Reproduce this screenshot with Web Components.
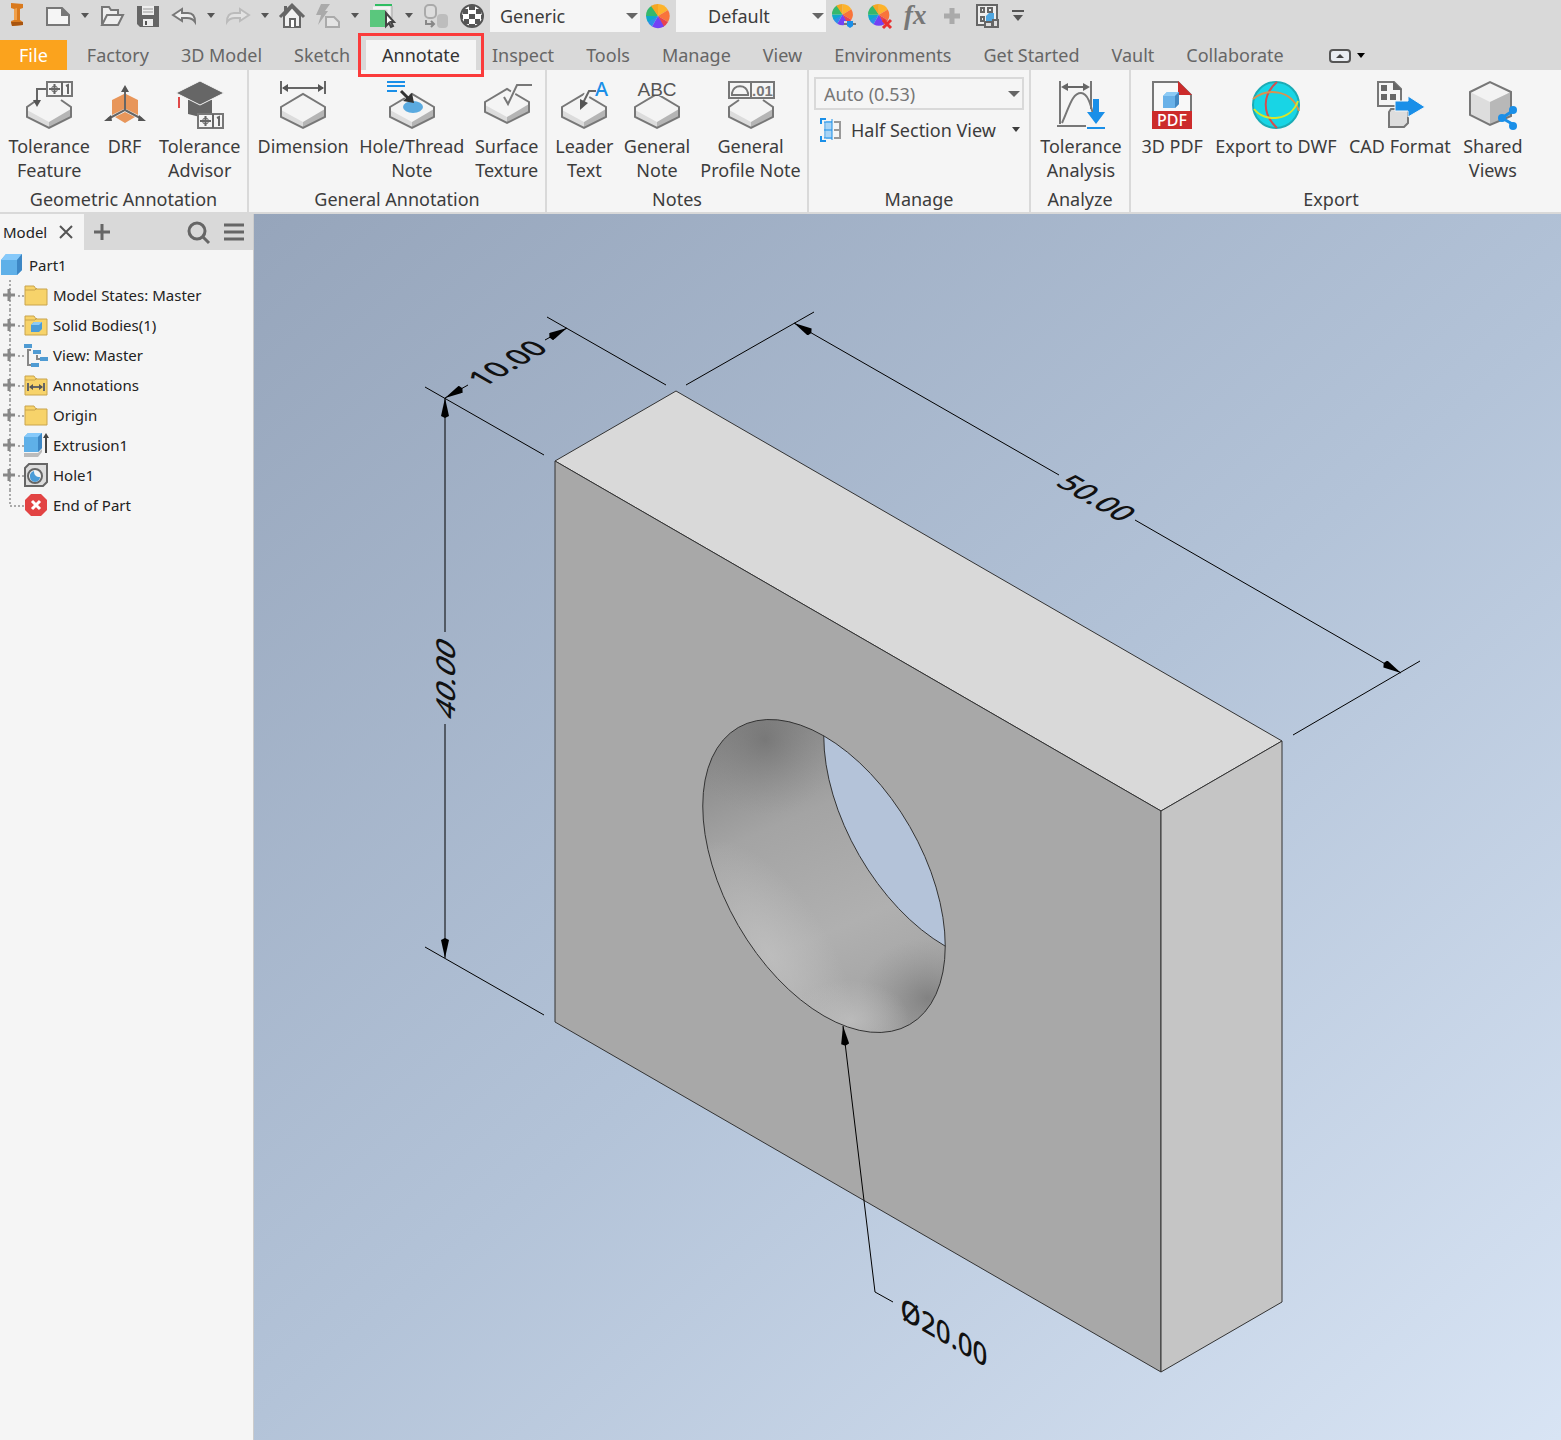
<!DOCTYPE html>
<html lang="en">
<head>
<meta charset="utf-8">
<title>Part1</title>
<style>
    body {
        --bar: #d9d9d9;
        --panel: #f5f5f5;
        --icon: #666;
        --blue: #1a8fe8;
        color: #3c3c3c;
        font: 18px/24px "Noto Sans", "Open Sans", sans-serif;
        margin: 0;
    }
</style>
</head>
<body>
<cad-app></cad-app>

<script>
// flat slab shared by most of the annotation icons, 48x48 box
const slab = `
    <path d="M2 26 24 13 46 26V36L24 47 2 36Z" fill="#f4f4f4"/>
    <path d="M2 29 24 41V47L2 36Z" fill="#dcdcdc"/>
    <path d="M46 28 24 41V47L46 36Z" fill="#b5b5b5"/>
`;
const slabEdge = '<path d="M2 26 24 13 46 26V36L24 47 2 36Z" fill="none" stroke="#777" stroke-width="2"/>';
const slabOpen = '<path d="M12 19 2 26V36L24 47 46 36V26L36 19" fill="none" stroke="#777" stroke-width="2"/>';
const frameOne = `
    <rect x="1" y="1" width="25" height="14" fill="#f5f5f5" stroke="#777" stroke-width="2"/>
    <path d="M16 1V15M8.500 3V13M3 8H14M20 5 22 4V13" fill="none" stroke="#666" stroke-width="2"/>
    <circle cx="8.500" cy="8" r="3" fill="none" stroke="#666"/>
`;
const wheel = `
    <path d="M12 12V0A12 12 0 0 1 22 6Z" fill="#fdb32b"/>
    <path d="M12 12 22 6A12 12 0 0 1 22 18Z" fill="#f9743a"/>
    <path d="M12 12 22 18A12 12 0 0 1 17 23Z" fill="#e8434f"/>
    <path d="M12 12 18 22.500A12 12 0 0 1 6 22.500Z" fill="#7341f5"/>
    <path d="M12 12 6 22.500A12 12 0 0 1 1 16Z" fill="#2d8fe8"/>
    <path d="M12 12 2 18A12 12 0 0 1 0 12Z" fill="#0ea9c9"/>
    <path d="M12 12H0A12 12 0 0 1 6 1.500Z" fill="#35b86b"/>
    <path d="M12 12 5 2A12 12 0 0 1 12 0Z" fill="#f5a623"/>
`;
const folder = '<path d="M1 3H10L12 6H23V22H1Z" fill="#f7d36a" stroke="#c9a44d"/><path d="M1 7H11L13 5" fill="none" stroke="#c9a44d"/>';

// name: [viewBox width, viewBox height, markup]
const icons = {
    logo: [14, 26, '<path d="M1 1 13 2V6L10 7V18L13 20V23L2 24 1 19 4 18V7L1 6Z" fill="#d97a1e"/><path d="M4 7 7 6V18L4 18Z" fill="#f0a04a"/><path d="M1 20 13 20V23L2 24Z" fill="#a85510"/>'],
    page: [24, 24, '<path d="M1 4H16L23 11V21H1Z" fill="#f5f5f5" stroke="#777" stroke-width="2"/><path d="M15 3 24 12H15Z" fill="#777"/>'],
    open: [24, 24, '<path d="M2 20V3H9L11 6H18V10" fill="#eee" stroke="#777" stroke-width="2"/><path d="M2 21 7 11H23L18 21Z" fill="#eee" stroke="#777" stroke-width="2"/>'],
    save: [24, 24, '<path d="M1 2H23V23H4L1 20Z" fill="#666"/><path d="M6 2H18V11H6ZM7 15H17V22H7Z" fill="#eee"/><path d="M7 5H17M7 8H17" stroke="#999" stroke-width="1"/><path d="M9 17H11V21H9Z" fill="#555"/>'],
    undo: [24, 24, '<path d="M1 11 10 5V9H16C21 9 23 12 23 18 21 15 19 14 15 14H10V17Z" fill="#eee" stroke="#777" stroke-width="2"/>'],
    redo: [24, 24, '<path d="M23 11 14 5V9H8C3 9 1 12 1 18 3 15 5 14 9 14H14V17Z" fill="#e2e2e2" stroke="#bbb" stroke-width="2"/>'],
    home: [24, 24, '<path d="M4 12 12 3 20 12V23H4Z" fill="#f1f1f1" stroke="#666" stroke-width="2"/><path d="M0 13 12 1 24 13" fill="none" stroke="#666" stroke-width="3"/><path d="M4 2H7V8L4 11Z" fill="#666"/><path d="M10 23V15H15V23" fill="#fff" stroke="#666" stroke-width="2"/>'],
    flash: [24, 24, '<path d="M5 0H14L9 7H12L2 21 5 11H0Z" fill="#aaa"/><path d="M10 13H18L23 18V23H10Z" fill="#e4e4e4" stroke="#aaa" stroke-width="2"/>'],
    select: [24, 24, '<path d="M5 1H22" fill="none" stroke="#2fbd62" stroke-width="2"/><path d="M22 2V14" stroke="#aaa" stroke-width="1"/><path d="M3 4H19V20" fill="none" stroke="#f3f3f3" stroke-width="3"/><path d="M0 6H15V23H0Z" fill="#5ac77d"/><path d="M16 9V22L19 19 21 23 23 22 21 18H24Z" fill="#fff" stroke="#444" stroke-width="2"/>'],
    stack: [24, 24, '<rect x="1" y="1" width="11" height="13" rx="4" fill="#ddd" stroke="#aaa" stroke-width="2"/><rect x="13" y="10" width="11" height="14" rx="4" fill="#bdbdbd"/><path d="M2 16V20H9M7 17 10 20 7 23" fill="none" stroke="#888" stroke-width="2"/>'],
    checker: [24, 24, '<circle cx="12" cy="12" r="11" fill="#fff" stroke="#555" stroke-width="2"/><path d="M9 1H15V6H9ZM3 5H8V10H3ZM16 5H21V10H16ZM9 10H15V15H9ZM1 11H3V15H1ZM21 11H23V15H21ZM4 15H9V20H4ZM15 15H20V20H15ZM9 20H15V23H9Z" fill="#555"/>'],
    wheel: [24, 24, wheel],
    wheelEdit: [24, 24, `<g transform="scale(.88)">${wheel}</g><path d="M12 17H24V24H12Z" fill="#d9d9d9"/><path d="M12 20H15M21 20H24" stroke="#777" stroke-width="2"/><path d="M15 17H21V22L18 24 15 22Z" fill="#1a8fe8"/>`],
    wheelClear: [24, 24, `<g transform="scale(.9)">${wheel}</g><path d="M15 16 23 24M23 16 15 24" stroke="#e83030" stroke-width="3"/>`],
    fx: [26, 26, '<text x="1" y="21" font-family="Liberation Serif, serif" font-size="27" font-style="italic" font-weight="bold" fill="#777">fx</text>'],
    plus: [24, 24, '<path d="M12 4V20M4 12H20" stroke="#aaa" stroke-width="5"/>'],
    params: [24, 24, '<path d="M1 1H21V21H1Z" fill="#eee" stroke="#666" stroke-width="2"/><path d="M5 4H8V8H5ZM12 4H16V8H12ZM5 13H8V17H5Z" fill="none" stroke="#666" stroke-width="2"/><path d="M10 12 13 9H18V17H10Z" fill="#4fa6e0"/><path d="M9 18H16V23H9ZM17 16H22V23H17Z" fill="#ddd" stroke="#666" stroke-width="2"/>'],
    more: [14, 14, '<path d="M1 2H13" stroke="#555" stroke-width="2"/><path d="M2 6H12L7 12Z" fill="#555"/>'],
    arrow: [8, 6, '<path d="M0 0H8L4 5Z" fill="currentColor"/>'],
    wideArrow: [12, 6, '<path d="M0 0H12L6 6Z" fill="#666"/>'],
    collapse: [24, 16, '<rect x="2" y="2" width="20" height="12" rx="3" fill="#e9edf2" stroke="#555" stroke-width="2"/><path d="M8 10H16L12 6Z" fill="#444"/>'],

    feature: [48, 48, `${slab}${slabOpen}<path d="M22 8H12V24" fill="none" stroke="#666" stroke-width="2"/><path d="M8 19H16L12 26Z" fill="#555"/><g transform="translate(21 0)">${frameOne}</g>`],
    drf: [48, 48, '<path d="M11 19 23 13V28L11 34ZM37 19 25 13V28L37 34ZM24 31 34 36 24 42 14 36Z" fill="#e8965a"/><path d="M24 9V29L7 38M24 29 41 38" fill="none" stroke="#666" stroke-width="2"/><path d="M20 11 24 4 28 11ZM10 34 3 40H11ZM38 34 45 40H37Z" fill="#555"/>'],
    advisor: [48, 48, `<path d="M12 19H36V34L24 36 12 33Z" fill="#666"/><path d="M24 0 48 12 24 24 0 12Z" fill="#666" stroke="#f5f5f5" stroke-width="1"/><path d="M3 16V27" stroke="#e04848" stroke-width="2"/><g transform="translate(21 32)">${frameOne}</g>`],
    dimension: [48, 48, `${slab}${slabEdge}<path d="M2 0V13M46 0V13M4 7H44" stroke="#666" stroke-width="2"/><path d="M3 7 9 3V11ZM45 7 39 3V11Z" fill="#555"/>`],
    hole: [48, 48, `${slab}${slabEdge}<ellipse cx="25" cy="26" rx="10" ry="6" fill="#5aaae0"/><path d="M12 8 20 16" stroke="#f5f5f5" stroke-width="6"/><path d="M-1 1H17M-1 5H17M-1 10H9" stroke="#1a8fe8" stroke-width="2"/><path d="M13 10 21 18" stroke="#333" stroke-width="3"/><path d="M26 22 15 20 24 12Z" fill="#333"/>`],
    surface: [48, 48, `<g transform="translate(0 -5)">${slab}${slabEdge}</g><path d="M21 17 25 23 34 3H49" fill="none" stroke="#f5f5f5" stroke-width="5"/><path d="M21 16 25 23 34 4H49" fill="none" stroke="#777" stroke-width="2"/>`],
    leader: [48, 48, `${slab}${slabEdge}<path d="M21 26 29 10H36" fill="none" stroke="#f5f5f5" stroke-width="6"/><path d="M22 24 29 10H36" fill="none" stroke="#666" stroke-width="2"/><path d="M20 29V18L28 22Z" fill="#555"/><text x="35" y="15" font-size="20" font-weight="500" fill="#1a8fe8">A</text>`],
    note: [48, 48, `${slab}${slabEdge}<path d="M2 0H46V15H2Z" fill="#f5f5f5"/><text x="24" y="15" text-anchor="middle" font-family="Liberation Sans, sans-serif" font-size="19" fill="#555">ABC</text>`],
    profile: [48, 48, `${slab}${slabOpen}<path d="M2 1H47V17H2Z" fill="#f5f5f5" stroke="#777" stroke-width="2"/><path d="M24 1V17M5 14H21V12C19 3 7 3 5 12Z" fill="none" stroke="#777" stroke-width="2"/><text x="25" y="15" font-family="Liberation Sans, sans-serif" font-size="15" font-weight="bold" fill="#777">.01</text>`],
    section: [24, 24, '<path d="M6 3H12V21H6Z" fill="#a9d4f5"/><path d="M6 1H1V6M1 18V23H6" fill="none" stroke="#1a8fe8" stroke-width="2"/><path d="M4 4H12M4 12H12M4 20H12M5 4V20M12 1V22" stroke="#1a8fe8" stroke-width="1"/><path d="M14 4H20V20H14M14 12H20" fill="none" stroke="#999" stroke-width="2"/>'],
    analysis: [48, 48, '<path d="M3 0V43M34 0V28M0 45H29" stroke="#777" stroke-width="2"/><path d="M5 42C12 27 15 12 24 12 31 12 34 25 36 33" fill="none" stroke="#777" stroke-width="2"/><path d="M7 6H30" stroke="#666" stroke-width="2"/><path d="M4 6 11 2V10ZM33 6 26 2V10Z" fill="#666"/><path d="M36 18H42V31H48L39 43 30 31H36ZM30 46H48V48H30Z" fill="#1a8fe8"/>'],
    pdf: [48, 48, '<path d="M5 1H30L43 14V31H5Z" fill="#f8f8f8" stroke="#777" stroke-width="2"/><path d="M30 0 44 14H30Z" fill="#cc2b2b"/><path d="M15 15 19 11H31V23L27 27H15Z" fill="#69b1e8"/><path d="M15 15 19 11H31L27 15Z" fill="#8ccaf5"/><path d="M27 15 31 11V23L27 27Z" fill="#4388c2"/><path d="M4 30H44V48H4Z" fill="#cc2b2b"/><text x="24" y="45" text-anchor="middle" font-size="16" font-weight="500" fill="#fff">PDF</text>'],
    dwf: [48, 48, '<circle cx="24" cy="24" r="23" fill="#18d5e5" stroke="#1cabb5" stroke-width="2"/><path d="M25 1C11 13 9 32 25 47" fill="none" stroke="#d44e50" stroke-width="2"/><path d="M1 18C15 7 39 8 47 30" fill="none" stroke="#d99250" stroke-width="2"/><path d="M2 28C13 42 39 40 46 20" fill="none" stroke="#d8e52b" stroke-width="2"/>'],
    format: [48, 48, '<path d="M2 1H18L25 8V25H2Z" fill="#f5f5f5" stroke="#777" stroke-width="2"/><path d="M17 0 26 9H17ZM5 4H11V10H5ZM5 13H11V19H5ZM14 13H20V19H14Z" fill="#666"/><path d="M15 28H32V42L28 46H13V31Z" fill="#ddd" stroke="#777" stroke-width="2"/><path d="M19 20H32V15L49 26 32 36V30H19Z" fill="#1a8fe8" stroke="#f5f5f5"/>'],
    shared: [48, 48, '<path d="M1 11 21 1 42 11V35L21 44 1 34Z" fill="#ddd"/><path d="M1 11 21 1 42 11 21 21Z" fill="#f3f3f3"/><path d="M21 21 42 11V35L21 44Z" fill="#b8b8b8"/><path d="M1 11 21 1 42 11V35L21 44 1 34Z" fill="none" stroke="#777" stroke-width="2"/><path d="M45 29 33 37 45 44" fill="none" stroke="#1a8fe8" stroke-width="3"/><g fill="#1a8fe8"><circle cx="44" cy="29" r="4"/><circle cx="33" cy="37" r="4"/><circle cx="44" cy="45" r="4"/></g>'],

    close: [16, 16, '<path d="M2 2 14 14M14 2 2 14" stroke="#555" stroke-width="2"/>'],
    add: [16, 16, '<path d="M8 0V16M0 8H16" stroke="#666" stroke-width="3"/>'],
    search: [24, 24, '<circle cx="11" cy="11" r="8" fill="none" stroke="#666" stroke-width="3"/><path d="M17 17 23 23" stroke="#666" stroke-width="3"/>'],
    menu: [20, 18, '<path d="M0 2H20M0 9H20M0 16H20" stroke="#666" stroke-width="3"/>'],
    part: [24, 24, '<path d="M1 7 6 1H22V17L17 22H1Z" fill="#5fb0e8"/><path d="M1 7 6 1H22L17 7Z" fill="#86c9fa"/><path d="M17 7 22 1V17L17 22Z" fill="#3d87c5"/>'],
    folder: [24, 24, folder],
    bodies: [24, 24, `${folder}<path d="M7 12 10 9H18V16L15 19H7Z" fill="#4b9cd8"/><path d="M7 12 10 9H18L15 12Z" fill="#8ccaf5"/>`],
    view: [24, 24, '<path d="M0 1H8V5H0ZM9 7H17V11H9ZM16 14H24V18H16ZM7 20H15V24H7Z" fill="#4f9bd3"/><path d="M7 7H4V22H7M13 12V16H16" fill="none" stroke="#888" stroke-width="2"/>'],
    annotations: [24, 24, `${folder}<path d="M4 10V18M20 10V18M6 14H18" stroke="#666" stroke-width="2"/><path d="M5 14 9 11V17ZM19 14 15 11V17Z" fill="#555"/>`],
    extrusion: [24, 24, '<path d="M0 20H14L18 16V19L14 24H0Z" fill="#bbb"/><path d="M0 4 4 0H18V15L14 19H0Z" fill="#5fb0e8"/><path d="M0 4 4 0H18L14 4Z" fill="#86c9fa"/><path d="M14 4 18 0V15L14 19Z" fill="#3d87c5"/><path d="M22 2V20" stroke="#444" stroke-width="2"/><path d="M19 5 22 0 25 5Z" fill="#444"/>'],
    holeFeature: [24, 24, '<path d="M1 5 5 1H23V19L19 23H1Z" fill="#ddd" stroke="#666" stroke-width="2"/><circle cx="11" cy="13" r="7" fill="#f5f5f5" stroke="#666" stroke-width="2"/><path d="M10 8C10 12 12 14 16 14A5 5 0 0 1 6 14 5 5 0 0 1 10 8Z" fill="#4b9cd8"/>'],
    end: [24, 24, '<path d="M7 1H17L23 7V17L17 23H7L1 17V7Z" fill="#e24343"/><path d="M8 8 16 16M16 8 8 16" stroke="#fff" stroke-width="3"/>']
};

class CadIcon extends HTMLElement {
    constructor() {
        super();
        this.attachShadow({ mode: 'open' });
    }

    connectedCallback() {
        let [width, height, markup] = icons[this.getAttribute('name')];
        this.shadowRoot.innerHTML = `
            <style>
            :host {
                display: block;
                flex: none;
            }

            svg {
                display: block;
                font-family: "Noto Sans", sans-serif;
                overflow: visible;
            }
            </style>
            <svg width="${width}" height="${height}" viewBox="0 0 ${width} ${height}" aria-hidden="true">${markup}</svg>
        `;
    }
}

class ToolButton extends HTMLElement {
    constructor() {
        super();
        this.attachShadow({ mode: 'open' });
    }

    connectedCallback() {
        let drop = this.hasAttribute('drop')
            ? '<button class="drop" aria-label="More"><cad-icon name="arrow"></cad-icon></button>'
            : '';
        this.shadowRoot.innerHTML = `
            <style>
            :host {
                color: #555;
                display: flex;
            }

            button {
                align-items: center;
                background: none;
                border: 0;
                color: inherit;
                display: flex;
                height: 32px;
                justify-content: center;
                padding: 0;
                width: 36px;
            }

            .drop {
                width: 18px;
            }

            :host([compact]) button {
                width: 24px;
            }
            </style>
            <button aria-label="${this.getAttribute('label')}"><cad-icon name="${this.getAttribute('icon')}"></cad-icon></button>${drop}
        `;
    }
}

class PickList extends HTMLElement {
    constructor() {
        super();
        this.attachShadow({ mode: 'open' });
    }

    connectedCallback() {
        this.shadowRoot.innerHTML = `
            <style>
            :host {
                align-items: center;
                box-sizing: border-box;
                display: grid;
                width: 150px;
            }

            select {
                appearance: none;
                background: var(--panel);
                border: 0;
                border-radius: 0;
                box-sizing: border-box;
                color: inherit;
                font: inherit;
                grid-area: 1 / 1;
                height: var(--height, 32px);
                padding: 0 20px 0 var(--indent, 10px);
                width: 100%;
            }

            cad-icon {
                grid-area: 1 / 1;
                justify-self: end;
                padding-right: 2px;
                pointer-events: none;
            }
            </style>
            <select aria-label="${this.getAttribute('label')}">
                <option>${this.getAttribute('value')}</option>
            </select>
            <cad-icon name="wideArrow"></cad-icon>
        `;
    }
}

class QuickBar extends HTMLElement {
    constructor() {
        super();
        this.attachShadow({ mode: 'open' });
        this.shadowRoot.innerHTML = `
            <style>
            :host {
                align-items: flex-start;
                background: var(--bar);
                display: flex;
                height: 40px;
            }

            .logo {
                height: 28px;
                padding: 2px 16px 0 10px;
            }

            .centered {
                --indent: 32px;
            }
            </style>
            <cad-icon class="logo" name="logo"></cad-icon>
            <tool-button icon="page" label="New" drop></tool-button>
            <tool-button icon="open" label="Open"></tool-button>
            <tool-button icon="save" label="Save"></tool-button>
            <tool-button icon="undo" label="Undo" drop></tool-button>
            <tool-button icon="redo" label="Redo" drop></tool-button>
            <tool-button icon="home" label="Home"></tool-button>
            <tool-button icon="flash" label="Update" drop></tool-button>
            <tool-button icon="select" label="Select" drop></tool-button>
            <tool-button icon="stack" label="Replace"></tool-button>
            <tool-button icon="checker" label="Material"></tool-button>
            <pick-list label="Material" value="Generic"></pick-list>
            <tool-button icon="wheel" label="Appearance"></tool-button>
            <pick-list class="centered" label="Appearance" value="Default"></pick-list>
            <tool-button icon="wheelEdit" label="Adjust"></tool-button>
            <tool-button icon="wheelClear" label="Clear"></tool-button>
            <tool-button icon="fx" label="Parameters"></tool-button>
            <tool-button icon="plus" label="Add"></tool-button>
            <tool-button icon="params" label="Components"></tool-button>
            <tool-button icon="more" label="Customize" compact></tool-button>
        `;
    }
}

class RibbonTab extends HTMLElement {
    constructor() {
        super();
        this.attachShadow({ mode: 'open' });
        this.shadowRoot.innerHTML = `
            <style>
            :host {
                display: block;
                position: relative;
            }

            button {
                background: none;
                border: 0;
                color: #666;
                font: inherit;
                height: 30px;
                padding: 0 16px;
                white-space: nowrap;
            }

            :host([file]) {
                margin-right: 4px;
            }

            :host([file]) button {
                background: #fba31d;
                color: #fff;
                padding: 0 19px;
            }

            :host([active]) button {
                background: var(--panel);
                color: #333;
            }

            /* callout around the current tab */
            :host([active])::after {
                border: 3px solid #fb3b3b;
                content: '';
                inset: -7px -8px;
                pointer-events: none;
                position: absolute;
                z-index: 2;
            }
            </style>
            <button><slot></slot></button>
        `;
    }
}

class RibbonTabs extends HTMLElement {
    constructor() {
        super();
        this.attachShadow({ mode: 'open' });
        this.shadowRoot.innerHTML = `
            <style>
            :host {
                background: var(--bar);
                display: flex;
                height: 30px;
            }

            .collapse {
                align-items: center;
                background: none;
                border: 0;
                color: #000;
                display: flex;
                gap: 5px;
                margin-left: 28px;
                padding: 2px 0 0;
            }
            </style>
            <ribbon-tab file>File</ribbon-tab>
            <ribbon-tab>Factory</ribbon-tab>
            <ribbon-tab>3D Model</ribbon-tab>
            <ribbon-tab>Sketch</ribbon-tab>
            <ribbon-tab active>Annotate</ribbon-tab>
            <ribbon-tab>Inspect</ribbon-tab>
            <ribbon-tab>Tools</ribbon-tab>
            <ribbon-tab>Manage</ribbon-tab>
            <ribbon-tab>View</ribbon-tab>
            <ribbon-tab>Environments</ribbon-tab>
            <ribbon-tab>Get Started</ribbon-tab>
            <ribbon-tab>Vault</ribbon-tab>
            <ribbon-tab>Collaborate</ribbon-tab>
            <button class="collapse" aria-label="Minimize ribbon">
                <cad-icon name="collapse"></cad-icon>
                <cad-icon name="arrow"></cad-icon>
            </button>
        `;
    }
}

class RibbonButton extends HTMLElement {
    constructor() {
        super();
        this.attachShadow({ mode: 'open' });
    }

    connectedCallback() {
        this.shadowRoot.innerHTML = `
            <style>
            :host {
                display: block;
            }

            button {
                align-items: center;
                background: none;
                border: 0;
                color: inherit;
                display: flex;
                flex-direction: column;
                font: inherit;
                gap: 5px;
                padding: 11px 4px 0;
                text-align: center;
                white-space: nowrap;
            }
            </style>
            <button>
                <cad-icon name="${this.getAttribute('icon')}"></cad-icon>
                <span><slot></slot></span>
            </button>
        `;
    }
}

class RibbonGroup extends HTMLElement {
    constructor() {
        super();
        this.attachShadow({ mode: 'open' });
    }

    connectedCallback() {
        this.shadowRoot.innerHTML = `
            <style>
            :host {
                border-right: 2px solid var(--bar);
                box-sizing: border-box;
                display: flex;
                flex: none;
                flex-direction: column;
                justify-content: space-between;
                padding-bottom: 1px;
            }

            .items {
                display: flex;
                justify-content: space-evenly;
                padding-left: 2px;
            }

            .title {
                text-align: center;
            }
            </style>
            <div class="items"><slot></slot></div>
            <div class="title">${this.getAttribute('label')}</div>
        `;
    }
}

class AnnotateRibbon extends HTMLElement {
    constructor() {
        super();
        this.attachShadow({ mode: 'open' });
        this.shadowRoot.innerHTML = `
            <style>
            :host {
                background: var(--panel);
                border-bottom: 2px solid var(--bar);
                display: flex;
                height: 142px;
            }

            .geometric { width: 249px; }
            .general { width: 298px; }
            .notes { width: 262px; }
            .manage { width: 222px; }
            .analyze { width: 100px; }
            .export {
                border: 0;
                width: 400px;
            }

            .column {
                display: flex;
                flex: 1;
                flex-direction: column;
                gap: 8px;
                padding: 7px 5px 0 3px;
            }

            .column pick-list {
                border: 2px solid var(--bar);
                color: #777;
                --height: 29px;
                --indent: 8px;
                width: 100%;
            }

            .section {
                align-items: center;
                background: none;
                border: 0;
                color: inherit;
                display: flex;
                font: inherit;
                gap: 7px;
                padding: 0 4px 0 6px;
            }

            .section cad-icon:last-child {
                margin-left: auto;
            }
            </style>
            <ribbon-group class="geometric" label="Geometric Annotation">
                <ribbon-button icon="feature">Tolerance<br>Feature</ribbon-button>
                <ribbon-button icon="drf">DRF</ribbon-button>
                <ribbon-button icon="advisor">Tolerance<br>Advisor</ribbon-button>
            </ribbon-group>
            <ribbon-group class="general" label="General Annotation">
                <ribbon-button icon="dimension">Dimension</ribbon-button>
                <ribbon-button icon="hole">Hole/Thread<br>Note</ribbon-button>
                <ribbon-button icon="surface">Surface<br>Texture</ribbon-button>
            </ribbon-group>
            <ribbon-group class="notes" label="Notes">
                <ribbon-button icon="leader">Leader<br>Text</ribbon-button>
                <ribbon-button icon="note">General<br>Note</ribbon-button>
                <ribbon-button icon="profile">General<br>Profile Note</ribbon-button>
            </ribbon-group>
            <ribbon-group class="manage" label="Manage">
                <div class="column">
                    <pick-list label="Annotation scale" value="Auto (0.53)"></pick-list>
                    <button class="section">
                        <cad-icon name="section"></cad-icon>
                        <span>Half Section View</span>
                        <cad-icon name="arrow"></cad-icon>
                    </button>
                </div>
            </ribbon-group>
            <ribbon-group class="analyze" label="Analyze">
                <ribbon-button icon="analysis">Tolerance<br>Analysis</ribbon-button>
            </ribbon-group>
            <ribbon-group class="export" label="Export">
                <ribbon-button icon="pdf">3D PDF</ribbon-button>
                <ribbon-button icon="dwf">Export to DWF</ribbon-button>
                <ribbon-button icon="format">CAD Format</ribbon-button>
                <ribbon-button icon="shared">Shared<br>Views</ribbon-button>
            </ribbon-group>
        `;
    }
}

class TreeNode extends HTMLElement {
    constructor() {
        super();
        this.attachShadow({ mode: 'open' });
    }

    connectedCallback() {
        let last = this.hasAttribute('last');
        let root = this.hasAttribute('root');
        let lines = last
            ? '<path d="M10 0V16H24" />'
            : '<path d="M10 0V30M18 16H24" />';
        let cross = last ? '' : '<path class="cross" d="M9 9V21M3 15H15" />';
        let expander = root ? '' : `
            <button aria-label="Expand">
                <svg width="24" height="30" viewBox="0 0 24 30">${lines}${cross}</svg>
            </button>
        `;
        this.shadowRoot.innerHTML = `
            <style>
            :host {
                align-items: center;
                display: flex;
                height: 30px;
            }

            button {
                background: none;
                border: 0;
                padding: 0;
            }

            svg {
                display: block;
            }

            path {
                fill: none;
                stroke: #aaa;
                stroke-dasharray: 2 2;
                stroke-width: 2;
            }

            .cross {
                stroke: #888;
                stroke-dasharray: none;
                stroke-width: 3;
            }

            span {
                padding-left: 5px;
            }
            </style>
            ${expander}
            <cad-icon name="${this.getAttribute('icon')}"></cad-icon>
            <span><slot></slot></span>
        `;
    }
}

class ModelBrowser extends HTMLElement {
    constructor() {
        super();
        this.attachShadow({ mode: 'open' });
        this.shadowRoot.innerHTML = `
            <style>
            :host {
                background: var(--panel);
                border-right: 1px solid #ccc;
                box-sizing: border-box;
                color: #222;
                display: block;
                flex: none;
                font-size: 15px;
                width: 254px;
            }

            header {
                align-items: center;
                background: var(--bar);
                display: flex;
                height: 36px;
                padding-right: 9px;
            }

            .tab {
                align-items: center;
                align-self: stretch;
                background: var(--panel);
                display: flex;
                gap: 11px;
                margin-right: 2px;
                padding: 0 10px 0 3px;
            }

            button {
                background: none;
                border: 0;
                padding: 0;
            }

            .add {
                padding: 0 8px;
            }

            .search {
                margin-left: auto;
                padding-right: 14px;
            }
            </style>
            <header>
                <div class="tab">
                    <span>Model</span>
                    <button aria-label="Close"><cad-icon name="close"></cad-icon></button>
                </div>
                <button class="add" aria-label="Add panel"><cad-icon name="add"></cad-icon></button>
                <button class="search" aria-label="Search"><cad-icon name="search"></cad-icon></button>
                <button aria-label="Menu"><cad-icon name="menu"></cad-icon></button>
            </header>
            <tree-node root icon="part">Part1</tree-node>
            <tree-node icon="folder">Model States: Master</tree-node>
            <tree-node icon="bodies">Solid Bodies(1)</tree-node>
            <tree-node icon="view">View: Master</tree-node>
            <tree-node icon="annotations">Annotations</tree-node>
            <tree-node icon="folder">Origin</tree-node>
            <tree-node icon="extrusion">Extrusion1</tree-node>
            <tree-node icon="holeFeature">Hole1</tree-node>
            <tree-node last icon="end">End of Part</tree-node>
        `;
    }
}

class ModelCanvas extends HTMLElement {
    constructor() {
        super();
        this.attachShadow({ mode: 'open' });
        this.shadowRoot.innerHTML = `
            <style>
            :host {
                background: linear-gradient(140deg, #96a5bb, #b3c3d8 52%, #d8e4f4);
                display: flex;
                flex: 1;
                min-width: 0;
            }

            svg {
                flex: 1;
                height: 100%;
                min-width: 0;
            }

            .edge {
                stroke: #333;
                stroke-width: 1;
                vector-effect: non-scaling-stroke;
            }

            .dim {
                fill: none;
                stroke: #000;
                stroke-width: 1;
            }

            text {
                fill: #111;
                font-size: 30px;
                font-weight: 500;
                text-anchor: middle;
            }
            </style>
            <svg viewBox="254 214 1307 1226" role="img" aria-label="Plate with a through hole">
                <defs>
                    <marker id="tip" markerUnits="userSpaceOnUse" markerWidth="20" markerHeight="8" viewBox="0 0 20 8" refX="20" refY="4" orient="auto-start-reverse">
                        <path d="M20 4 2 0 0 4 2 8Z"/>
                    </marker>
                    <clipPath id="bore">
                        <circle r="140" transform="matrix(.866 .5 0 1 824 876)"/>
                    </clipPath>
                    <linearGradient id="wall" gradientUnits="userSpaceOnUse" x1="765" y1="720" x2="900" y2="1030">
                        <stop offset="0" stop-color="#858585"/>
                        <stop offset=".3" stop-color="#a4a4a4"/>
                        <stop offset=".65" stop-color="#b0b0b0"/>
                        <stop offset="1" stop-color="#a0a0a0"/>
                    </linearGradient>
                    <radialGradient id="dark">
                        <stop offset="0" stop-color="#6c6c6c" stop-opacity=".6"/>
                        <stop offset="1" stop-color="#8a8a8a" stop-opacity="0"/>
                    </radialGradient>
                    <radialGradient id="light">
                        <stop offset="0" stop-color="#c0c0c0" stop-opacity=".8"/>
                        <stop offset="1" stop-color="#c0c0c0" stop-opacity="0"/>
                    </radialGradient>
                </defs>

                <path class="edge" d="M676 391 1282 741 1161 811 555 461Z" fill="#d9d9d9"/>
                <path class="edge" d="M555 461 1161 811V1372L555 1022Z" fill="#a8a8a8"/>
                <path class="edge" d="M1161 811 1282 741V1302L1161 1372Z" fill="#c5c5c5"/>

                <g clip-path="url(#bore)">
                    <path d="M700 710H950V1040H700Z" fill="url(#wall)"/>
                    <ellipse cx="765" cy="740" rx="75" ry="75" fill="url(#dark)"/>
                    <ellipse cx="928" cy="998" rx="70" ry="60" fill="url(#dark)"/>
                    <ellipse cx="770" cy="955" rx="60" ry="130" transform="rotate(-32 770 955)" fill="url(#light)"/>
                    <ellipse cx="850" cy="1020" rx="60" ry="40" fill="url(#light)"/>
                    <circle class="edge" r="140" transform="matrix(.866 .5 0 1 945 806)" fill="#b4c3d9"/>
                </g>
                <circle class="edge" r="140" transform="matrix(.866 .5 0 1 824 876)" fill="none"/>

                <g class="dim">
                    <path d="M547 317 666 385M425 387 544 455M425 947 544 1015M686 385 814 312M1293 735 1420 661"/>
                    <path d="M468 385 445 398" marker-end="url(#tip)"/>
                    <path d="M545 340 567 328" marker-end="url(#tip)"/>
                    <path d="M445 632V398" marker-end="url(#tip)"/>
                    <path d="M445 724V958" marker-end="url(#tip)"/>
                    <path d="M1059 475 794 323" marker-end="url(#tip)"/>
                    <path d="M1135 520 1401 673" marker-end="url(#tip)"/>
                    <path d="M893 1302 875 1292 843 1026" marker-end="url(#tip)"/>
                </g>

                <!-- values lie in the isometric planes of their dimensions -->
                <text y="11" transform="matrix(.866 -.5 .866 .5 507 363)">10.00</text>
                <text y="11" transform="matrix(0 -1 .866 .5 445 678)">40.00</text>
                <text y="11" transform="matrix(.866 .5 -.866 .5 1097 498)">50.00</text>
                <text y="11" transform="matrix(.866 .5 0 1 944 1332)">Ø20.00</text>
            </svg>
        `;
    }
}

class CadApp extends HTMLElement {
    constructor() {
        super();
        this.attachShadow({ mode: 'open' });
        this.shadowRoot.innerHTML = `
            <style>
            :host {
                background: var(--bar);
                display: flex;
                flex-direction: column;
                min-height: 100vh;
            }

            main {
                display: flex;
                flex: 1;
            }
            </style>
            <quick-bar></quick-bar>
            <ribbon-tabs></ribbon-tabs>
            <annotate-ribbon></annotate-ribbon>
            <main>
                <model-browser></model-browser>
                <model-canvas></model-canvas>
            </main>
        `;
    }
}

window.customElements.define('cad-icon', CadIcon);
window.customElements.define('tool-button', ToolButton);
window.customElements.define('pick-list', PickList);
window.customElements.define('quick-bar', QuickBar);
window.customElements.define('ribbon-tab', RibbonTab);
window.customElements.define('ribbon-tabs', RibbonTabs);
window.customElements.define('ribbon-button', RibbonButton);
window.customElements.define('ribbon-group', RibbonGroup);
window.customElements.define('annotate-ribbon', AnnotateRibbon);
window.customElements.define('tree-node', TreeNode);
window.customElements.define('model-browser', ModelBrowser);
window.customElements.define('model-canvas', ModelCanvas);
window.customElements.define('cad-app', CadApp);
</script>
</body>
</html>
